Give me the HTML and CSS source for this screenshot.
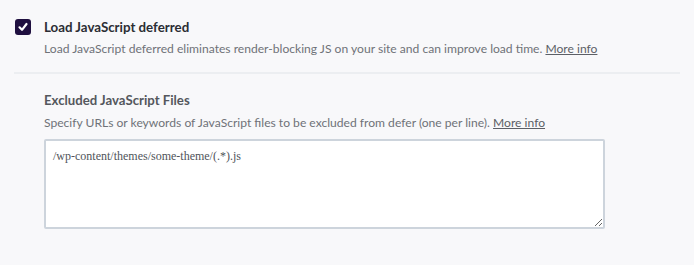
FILE: index.html
```html
<!DOCTYPE html>
<html>
<head>
<meta charset="utf-8">
<link rel="stylesheet" href="styles.css">
</head>
<body>
<div class="page">
  <div class="option">
    <span class="check"><svg width="16" height="16" viewBox="0 0 16 16"><path d="M4.5 8.3 L7 10.8 L11.5 5" fill="none" stroke="#fff" stroke-width="2.2" stroke-linecap="round" stroke-linejoin="round"/></svg></span>
    <div class="option-text">
      <div class="title">Load JavaScript deferred</div>
      <div class="desc">Load JavaScript deferred eliminates render-blocking JS on your site and can improve load time. <a href="#">More info</a></div>
    </div>
  </div>
  <div class="sep"></div>
  <div class="field">
    <div class="label">Excluded JavaScript Files</div>
    <div class="desc">Specify URLs or keywords of JavaScript files to be excluded from defer (one per line). <a href="#">More info</a></div>
    <textarea class="area">/wp-content/themes/some-theme/(.*).js</textarea>
  </div>
</div>
</body>
</html>
```
FILE: styles.css
```css
html, body {
  margin: 0;
  padding: 0;
  background: #f8f8fa;
}
body {
  font-family: "Lato", "Noto Sans", sans-serif;
  width: 694px;
  height: 265px;
  overflow: hidden;
}
.page {
  padding-top: 18px;
}
.option {
  display: flex;
  padding-left: 15px;
  gap: 13px;
}
.check {
  width: 16px;
  height: 16px;
  border-radius: 3px;
  background: #1f0f3f;
  margin-top: 1px;
  display: flex;
}
.title {
  font-size: 13.3px;
  font-weight: 700;
  color: #2b2d33;
  line-height: 18px;
}
.desc {
  font-size: 12.1px;
  color: #6f7278;
  line-height: 18px;
  margin-top: 4px;
}
.desc a {
  color: #5c5f66;
  text-decoration: underline;
}
.sep {
  margin: 14px 14px 0 14px;
  height: 2px;
  background: #eceef1;
}
.field {
  padding: 17px 0 0 44px;
}
.label {
  font-size: 13.2px;
  font-weight: 700;
  color: #54575d;
  line-height: 18px;
}
.field .desc {
  margin-top: 5px;
}
.area {
  display: block;
  margin-top: 7px;
  width: 561px;
  height: 90px;
  box-sizing: border-box;
  border: 2px solid #cdd4dc;
  border-radius: 2px;
  background: #fff;
  font-family: "Liberation Serif", serif;
  font-size: 12px;
  color: #50545a;
  padding: 8px 7px;
  resize: vertical;
}
```
